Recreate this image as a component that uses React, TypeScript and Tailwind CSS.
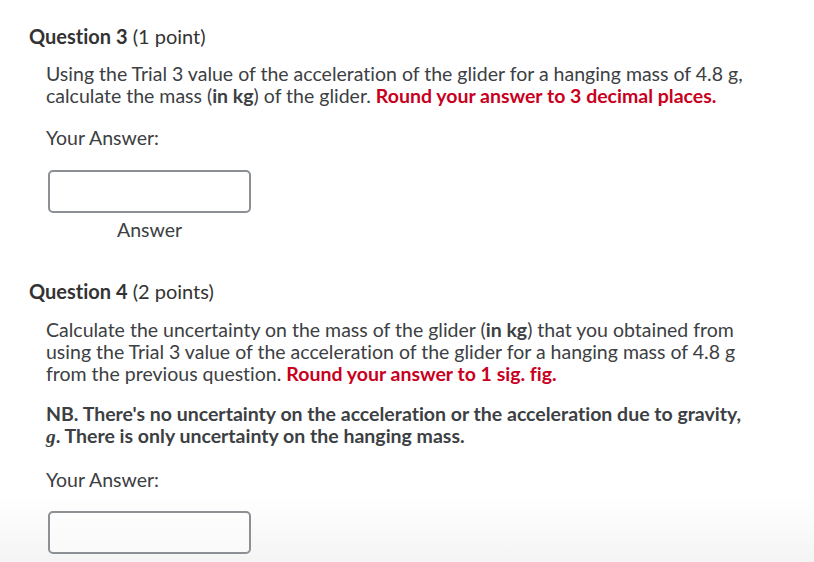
import React from "react";

const Red: React.FC<{ children: React.ReactNode }> = ({ children }) => (
  <span className="font-bold text-[#c8001e]">{children}</span>
);

const AnswerBox: React.FC = () => (
  <div className="ml-[2px] h-[43px] w-[203px] rounded-[5px] border-2 border-[#8c9094] bg-white/40" />
);

export default function App() {
  return (
    <div
      className="min-h-[562px] w-full bg-[linear-gradient(to_bottom,#ffffff_0px,#ffffff_495px,#f4f4f4_562px)] pl-[29px] pt-[22px] text-[#3c4043] [font-variant-ligatures:none]"
      style={{ fontFamily: "Lato, 'Open Sans', sans-serif" }}
    >
      {/* Question 3 */}
      <h2 className="text-[20px] leading-[28px] text-[#333]">
        <span className="font-bold">Question 3</span> (1 point)
      </h2>
      <div className="pl-[17px] text-[19.5px] leading-[22px]">
        <p className="mt-[13px]">
          Using the Trial 3 value of the acceleration of the glider for a hanging mass of 4.8 g,
          <br />
          calculate the mass (<span className="font-bold">in kg</span>) of the glider.{" "}
          <Red>Round your answer to 3 decimal places.</Red>
        </p>
        <p className="mt-[20px]">Your Answer:</p>
        <div className="mt-[21px]">
          <AnswerBox />
          <div className="mt-[6px] w-[207px] text-center">Answer</div>
        </div>
      </div>

      {/* Question 4 */}
      <h2 className="mt-[36px] text-[20px] leading-[28px] text-[#333]">
        <span className="font-bold">Question 4</span> (2 points)
      </h2>
      <div className="pl-[17px] text-[19.5px] leading-[22px]">
        <p className="mt-[14px]">
          Calculate the uncertainty on the mass of the glider (<span className="font-bold">in kg</span>) that you obtained from
          <br />
          using the Trial 3 value of the acceleration of the glider for a hanging mass of 4.8 g
          <br />
          from the previous question. <Red>Round your answer to 1 sig. fig.</Red>
        </p>
        <p className="mt-[18px] font-bold">
          NB. There's no uncertainty on the acceleration or the acceleration due to gravity,
          <br />
          <span className="italic" style={{ fontFamily: "'Liberation Serif', serif" }}>g</span>. There is only uncertainty on the hanging mass.
        </p>
        <p className="mt-[21px]">Your Answer:</p>
        <div className="mt-[20px]">
          <AnswerBox />
        </div>
      </div>
    </div>
  );
}
